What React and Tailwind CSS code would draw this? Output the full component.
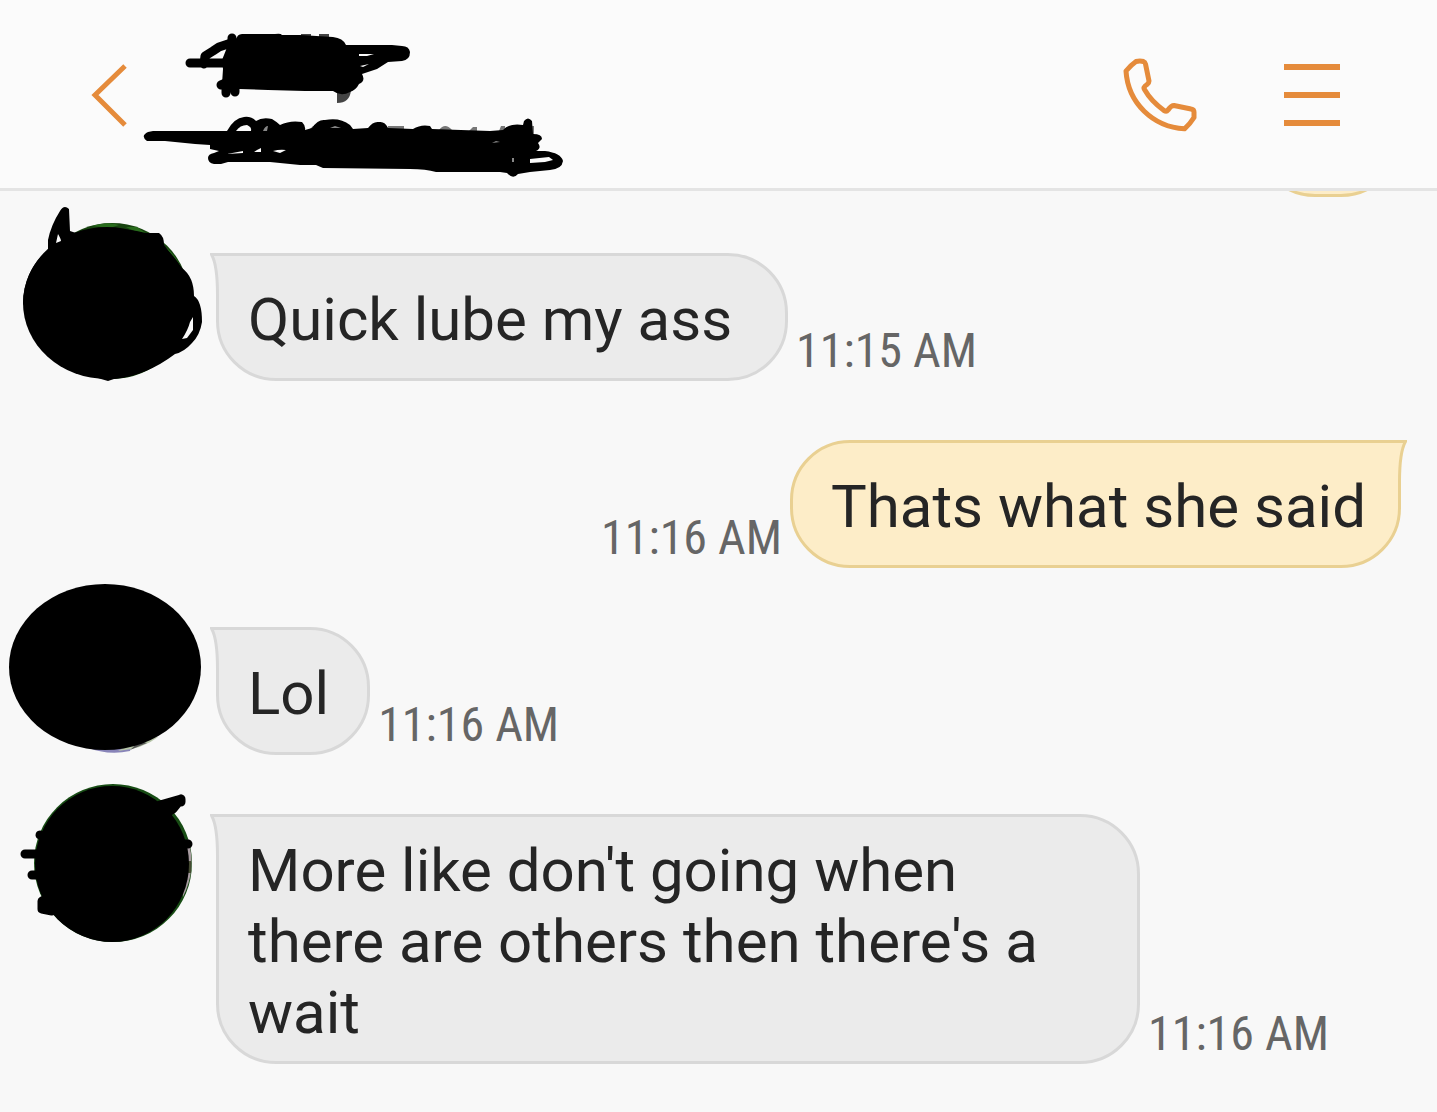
const messages = [
  { id: 1, text: 'Quick lube my ass\u00a0', time: '11:15 AM', avatar: 'scribble' },
  { id: 2, text: 'Thats what she said', time: '11:16 AM', mine: true },
  { id: 3, text: 'Lol', time: '11:16 AM', avatar: 'oval' },
  { id: 4, text: "More like don't going when there are others then there's a wait", time: '11:16 AM', avatar: 'spikes' },
];

function BackIcon() {
  return (
    <svg width="44" height="70" viewBox="88 60 44 70" fill="none" stroke="#e58b3b" strokeWidth="5">
      <path d="M125 66 L95 95 L125 125" />
    </svg>
  );
}

function PhoneIcon() {
  return (
    <svg width="80" height="80" viewBox="1120 55 80 80" fill="none" stroke="#e58b3b" strokeWidth="5" strokeLinejoin="round">
      <path d="M1126 71 Q1131 65 1136 61.5 Q1140 60.5 1143.5 61.5 Q1145 62 1145.5 64 L1149 81 Q1149 83 1147 84.500 Q1143 87 1144.500 89.500 Q1151 101 1164 110.500 Q1166.500 112 1168 110 Q1171 105.500 1174 105.500 L1191 109 Q1194 109.500 1194 112 L1194 117.500 Q1190 124 1184.500 128.800 C1153 127 1128 103 1126 71 Z" />
    </svg>
  );
}

function MenuIcon() {
  return (
    <svg width="56" height="62" viewBox="0 0 56 62" fill="#e58b3b">
      <rect width="56" height="6" />
      <rect y="28" width="56" height="6" />
      <rect y="56" width="56" height="6" />
    </svg>
  );
}

// contact name and number, both crossed out
function HiddenContact() {
  return (
    <svg className="h-[186px] w-[440px] min-w-0 shrink" viewBox="140 2 440 186" role="img" aria-label="Hidden contact">
      <g fill="#444">
        <path d="M301 34h10v4h-10zM319 34h10v4h-10z" />
        <path d="M337 90h14q-1 13 -14 13z" />
      </g>
      <g fill="#777">
        <path d="M388 126h16v4h-16zM439 130q6 -8 13 0zM469 131l4 -4h4v4zM499 131l2 -5h4v5zM531 126h3v8h-3zM309 130l4 -4h5v4z" />
      </g>
      <g fill="none" stroke="#000" strokeWidth="9" strokeLinecap="round" strokeLinejoin="round">
        <path d="M190 63 H232 M204 64 L205 56 L213 51 L219 47 L234 42" />
        <path d="M232 38V46 M221 85L228 82 M226 93V84 M235 92V84" />
      </g>
      <path d="M228 42 L236 40 Q237 34 242 34 H275 Q281 33 282 35 L300 35 L333 37 Q343 38 346 45 H392 L402 46 Q409 46 410 52 Q410 60 402 61 L388 62 L377 69 L362 74 Q366 81 359 84 Q356 90 350 92 Q341 97 333 91 H305 L268 90 L239 89 L224 90 L222 84 L223 69 L222 60 L226 50 Z" />
      <path d="M148 132 L153 131 H227 Q234 118 244 117 Q251 116 256 121 Q262 117 272 119 Q277 122 280 125 Q290 120 302 122 Q306 126 305 130 L312 128 Q318 119 325 120 Q340 117 350 125 L353 129 L368 128 Q373 121 379 122 Q385 121 388 128 L413 129 Q421 124 430 126 L432 129 L490 131 L503 130 Q509 123 523 125 L524 121 Q528 116 532 121 L533 134 Q542 134 542 139 L538 143 Q542 148 536 151 H545 Q561 153 563 161 Q562 169 550 170 L530 172 L518 174 Q513 180 507 173 L500 172 H436 Q426 169 410 169 L323 168 L316 165 H300 L270 162 H228 L221 164 H214 Q208 163 208 158 Q208 154 214 153 L219 151 L210 149 L210 145 L195 144 L165 141 L147 141 Q140 136 148 132 Z" />
      <g fill="#fafafa">
        <path d="M236 131 Q240 125 247 125 Q252 127 251 131 Z" />
        <path d="M227 154 L243 151 L243 153 Z M257 150 L261 148 V152 L254 152 Z M273 151 Q280 149 286 150 L280 153 Z" />
        <path d="M530 159 L549 157 L553 160 L545 162 L530 163 Z" />
        <path d="M359 54 H374 L367 56 H359 Z M360 66 L369 64 L363 67 Z" />
      </g>
      <path d="M263 131 Q265 126 268 126 L267 131 Z M330 128 L335 126 L341 128 Z M492 143 L496 141 L500 142 Z M512 158h2v4h-2z" fill="#888" />
    </svg>
  );
}

function Avatar({ kind }) {
  return (
    <div className="relative h-0 w-[216px] shrink-0">
      <div className="absolute -top-[50px] left-0">
        {kind === 'scribble' && (
          <svg width="216" height="190" viewBox="0 203 216 190">
            <ellipse cx="112" cy="301" rx="78" ry="78" fill="#17430f" />
            <path d="M92 226 Q108 221 119 225 L110 228 Z M126 227 L137 227 L147 234 L134 231 Z M166 247 Q176 256 181 267 L172 260 Z" fill="#286b1c" />
            <ellipse cx="107" cy="303" rx="84" ry="76" />
            <path d="M23 303 Q24 270 48 250 L48 240 Q51 225 60 211 Q64 204 69 209 L70 231 L76 233 Q109 224 146 233 L159 233 Q164 236 164 245 Q174 258 182 268 Q194 277 194 296 Q202 301 202 322 Q200 335 192 343 Q184 352 175 354 Q146 376 114 379 L108 381 L101 379 Q40 360 23 303 Z" />
            <path d="M56 243 L58 234 Q61 239 61 241 Z M190 322 L193 317 V330 L187 338 L182 339 Q188 330 190 322 Z" fill="#f8f8f8" />
          </svg>
        )}
        {kind === 'oval' && (
          <svg width="216" height="190" viewBox="0 576 216 190">
            <path d="M86 746 Q108 755 130 750 L132 744 Z" fill="#8884b8" />
            <path d="M118 750 Q143 748 158 736 L140 738 Z" fill="#b6c5a8" />
            <path d="M130 749 L147 742 L140 740 Z" fill="#555" />
            <ellipse cx="105" cy="666" rx="96" ry="83" />
          </svg>
        )}
        {kind === 'spikes' && (
          <svg width="216" height="190" viewBox="0 763 216 190">
            <circle cx="113" cy="862" r="79" fill="#174c14" />
            <path d="M188 838 Q197 868 183 896 L180 865 Z" fill="#a79ba0" />
            <path d="M188 860h3v12h-3z" fill="#454b32" />
            <ellipse cx="112" cy="863" rx="77" ry="78" />
            <g stroke="#000" strokeWidth="9" strokeLinecap="round" strokeLinejoin="round">
              <path d="M160 804 L181 798 L173 808 L166 812 Z M181 798 V801 M188 843 H178 M40 834 L50 837 M25 853 H45 M32 874 H45 M42 900 V908 L52 910 L48 897 Z" />
            </g>
          </svg>
        )}
      </div>
    </div>
  );
}

function Tail({ mine }) {
  return (
    <svg
      className={`absolute -top-[3px] ${mine ? '-right-[9px] -scale-x-100' : '-left-[9px]'}`}
      width="16"
      height="42"
      viewBox="0 0 16 42"
      fill={mine ? '#fdedc8' : '#ebebeb'}
    >
      <path d="M2 1 Q7.500 12 7.500 42 H16 V1 Z" />
      <path
        d="M16 1.500 H1.500 Q7.500 12 7.500 42"
        fill="none"
        stroke={mine ? '#e9d092' : '#d8d8d8'}
        strokeWidth="3"
      />
    </svg>
  );
}

function Message({ text, time, mine, avatar }) {
  return (
    <li className={`flex items-end ${mine ? 'flex-row-reverse pr-9' : ''}`}>
      {!mine && (
        <div className="self-start">
          <Avatar kind={avatar} />
        </div>
      )}
      <div
        className={`relative flex min-h-32 max-w-[924px] items-center rounded-[60px] border-[3px] pt-[18px] pb-[13px] ${
          mine
            ? 'rounded-tr-none border-[#e9d092] bg-[#fdedc8] pr-8 pl-[38px]'
            : 'rounded-tl-none border-[#d8d8d8] bg-[#ebebeb] pr-[38px] pl-[29px]'
        }`}
      >
        <Tail mine={mine} />
        <p className="text-[60px] leading-[71px] text-[#252525]">{text}</p>
      </div>
      <time className="mx-2 mb-0.5 shrink-0 font-['Roboto_Condensed','Roboto',sans-serif] text-[48px] leading-14 whitespace-nowrap text-[#666]">
        {time}
      </time>
    </li>
  );
}

export default function App() {
  return (
    <div className="min-h-screen bg-[#f8f8f8] font-['Roboto',sans-serif]">
      <header className="flex items-center border-b-[3px] border-[#e4e4e4] bg-[#fbfbfb] pt-0.5 pr-[97px] pl-[88px]">
        <button type="button" aria-label="Back" className="mr-2 shrink-0">
          <BackIcon />
        </button>
        <HiddenContact />
        <div className="ml-auto flex shrink-0 items-center gap-[84px]">
          <button type="button" aria-label="Call">
            <PhoneIcon />
          </button>
          <button type="button" aria-label="Menu">
            <MenuIcon />
          </button>
        </div>
      </header>

      <main className="pb-12">
        {/* bottom edge of the message scrolled under the header */}
        <div className="flex h-1.5 items-end justify-end overflow-hidden pr-9">
          <div className="h-32 w-[146px] shrink-0 rounded-[60px] border-[3px] border-[#e9d092] bg-[#fdedc8]" />
        </div>
        <ul className="flex flex-col gap-[59px] pt-14">
          {messages.map((m) => (
            <Message key={m.id} {...m} />
          ))}
        </ul>
      </main>
    </div>
  );
}
